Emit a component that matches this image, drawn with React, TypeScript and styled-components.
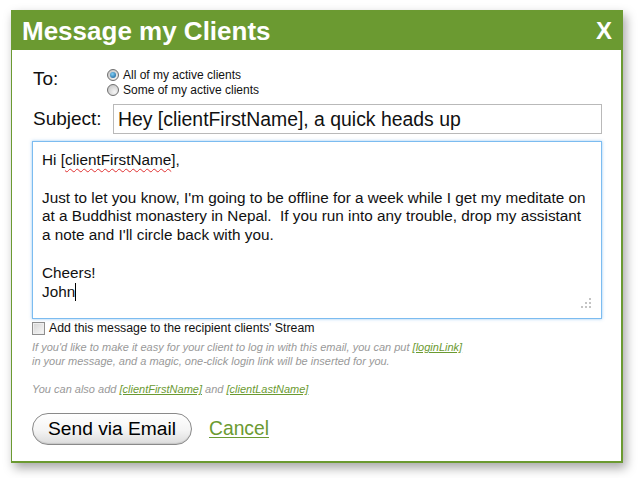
import styled, { createGlobalStyle } from 'styled-components';

const GlobalStyle = createGlobalStyle`
	html, body {
		margin: 0;
		padding: 0;
		background: #ffffff;
		font-family: Arial, 'Liberation Sans', sans-serif;
	}
`;

const GREEN = '#6b9a31';

export default function App() {
	return (
		<Page>
			<GlobalStyle />
			<Dialog>
				<Header>
					<Title>Message my Clients</Title>
					<Close>X</Close>
				</Header>
				<Body>
					<ToRow>
						<Label>To:</Label>
						<RadioGroup>
							<RadioLine>
								<Radio $checked />
								All of my active clients
							</RadioLine>
							<RadioLine>
								<Radio />
								Some of my active clients
							</RadioLine>
						</RadioGroup>
					</ToRow>
					<SubjectRow>
						<Label>Subject:</Label>
						<SubjectInput>Hey [clientFirstName], a quick heads up</SubjectInput>
					</SubjectRow>
					<MessageBox>
						<Line>
							Hi [<Misspelled>clientFirstName</Misspelled>],
						</Line>
						<Line />
						<Line>Just to let you know, I'm going to be offline for a week while I get my meditate on</Line>
						<Line>at a Buddhist monastery in Nepal.&nbsp; If you run into any trouble, drop my assistant</Line>
						<Line>a note and I'll circle back with you.</Line>
						<Line />
						<Line>Cheers!</Line>
						<Line>
							John<Caret />
						</Line>
						<Grip>
							<svg width="11" height="11" viewBox="0 0 11 11">
								<g fill="#c4c4c4">
									<rect x="8" y="0" width="2" height="2" />
									<rect x="8" y="4" width="2" height="2" />
									<rect x="4" y="4" width="2" height="2" />
									<rect x="8" y="8" width="2" height="2" />
									<rect x="4" y="8" width="2" height="2" />
									<rect x="0" y="8" width="2" height="2" />
								</g>
							</svg>
						</Grip>
					</MessageBox>
					<CheckRow>
						<Checkbox />
						Add this message to the recipient clients' Stream
					</CheckRow>
					<Help>
						If you'd like to make it easy for your client to log in with this email, you can put{' '}
						<Token>[loginLink]</Token>
						<br />
						in your message, and a magic, one-click login link will be inserted for you.
					</Help>
					<Help $spaced>
						You can also add <Token>[clientFirstName]</Token> and <Token>[clientLastName]</Token>
					</Help>
					<Actions>
						<SendButton>Send via Email</SendButton>
						<CancelLink>Cancel</CancelLink>
					</Actions>
				</Body>
			</Dialog>
		</Page>
	);
}

const Page = styled.div`
	padding: 10px 0 0 11px;
	width: 640px;
	height: 478px;
	box-sizing: border-box;
`;

const Dialog = styled.section`
	width: 612px;
	height: 453px;
	box-sizing: border-box;
	border: 1px solid ${GREEN};
	border-width: 0 2px 2px 1px;
	background: #fff;
	box-shadow: 3px 5px 10px rgba(0, 0, 0, 0.35);
	display: flex;
	flex-direction: column;
`;

const Header = styled.header`
	display: flex;
	align-items: center;
	justify-content: space-between;
	height: 40px;
	padding: 0 9px 0 10px;
	background: ${GREEN};
	color: #fff;
`;

const Title = styled.h1`
	margin: 0;
	font-size: 26px;
	font-weight: bold;
	padding-top: 2px;
`;

const Close = styled.span`
	font-size: 24px;
	font-weight: bold;
	padding-top: 1px;
`;

const Body = styled.div`
	padding: 18px 19px 0 20px;
	display: flex;
	flex-direction: column;
`;

const ToRow = styled.div`
	display: flex;
	align-items: flex-start;
`;

const Label = styled.label`
	width: 80px;
	font-size: 19px;
	color: #111;
	padding-left: 1px;
`;

const RadioGroup = styled.div`
	display: flex;
	flex-direction: column;
	margin-left: -6px;
	margin-top: -1px;
`;

const RadioLine = styled.div`
	display: flex;
	align-items: center;
	font-size: 12px;
	color: #111;
	height: 15px;
`;

const Radio = styled.span<{ $checked?: boolean }>`
	width: 12px;
	height: 12px;
	border-radius: 50%;
	box-sizing: border-box;
	border: 1px solid #6f6f6f;
	background: radial-gradient(circle at 65% 70%, #f6f6f6, #bdbdbd);
	margin-right: 4px;
	position: relative;

	${(p) =>
		p.$checked &&
		`
		&::after {
			content: '';
			position: absolute;
			left: 2px;
			top: 2px;
			width: 6px;
			height: 6px;
			border-radius: 50%;
			background: radial-gradient(circle at 40% 35%, #7fd0f8, #10548c);
		}
	`}
`;

const SubjectRow = styled.div`
	display: flex;
	align-items: center;
	margin-top: 7px;
`;

const SubjectInput = styled.div`
	flex: 1;
	height: 30px;
	box-sizing: border-box;
	border: 1px solid #b9b9b9;
	padding: 3px 0 0 4px;
	font-size: 19.4px;
	color: #111;
	white-space: nowrap;
	overflow: hidden;
`;

const MessageBox = styled.div`
	position: relative;
	margin-top: 7px;
	height: 178px;
	box-sizing: border-box;
	border: 1px solid #7cbcf0;
	box-shadow: 0 0 3px rgba(110, 175, 235, 0.7);
	padding: 9px 0 0 9px;
	font-size: 15.3px;
	color: #111;
	white-space: nowrap;
`;

const Line = styled.div`
	height: 18.8px;
	line-height: 18.8px;
`;

const Misspelled = styled.span`
	text-decoration: underline wavy #e03030;
	text-decoration-thickness: 1px;
	text-underline-offset: 3px;
`;

const Caret = styled.span`
	display: inline-block;
	width: 1px;
	height: 18px;
	background: #000;
	vertical-align: -4px;
`;

const Grip = styled.span`
	position: absolute;
	right: 9px;
	bottom: 9px;
	line-height: 0;
`;

const CheckRow = styled.label`
	display: flex;
	align-items: center;
	margin-top: 2px;
	font-size: 12.3px;
	color: #111;
`;

const Checkbox = styled.span`
	width: 11px;
	height: 11px;
	border: 1px solid #8f8f8f;
	background: linear-gradient(135deg, #d4d4d4, #f8f8f8);
	box-shadow: inset 0 0 0 1px #eee;
	margin-right: 4px;
`;

const Help = styled.p<{ $spaced?: boolean }>`
	margin: ${(p) => (p.$spaced ? '14px 0 0' : '5px 0 0')};
	font-size: 11px;
	line-height: 14px;
	font-style: italic;
	color: #999;
`;

const Token = styled.a`
	color: ${GREEN};
	text-decoration: underline;
`;

const Actions = styled.div`
	display: flex;
	align-items: center;
	gap: 17px;
	margin-top: 17px;
`;

const SendButton = styled.button`
	height: 32px;
	padding: 0 15px;
	border: 1px solid #8a8a8a;
	border-radius: 16px;
	background: linear-gradient(#ffffff, #f4f4f4 55%, #dcdcdc);
	box-shadow: inset 0 -1px 1px rgba(0, 0, 0, 0.1);
	font-family: Arial, 'Liberation Sans', sans-serif;
	font-size: 19.2px;
	color: #000;
`;

const CancelLink = styled.a`
	font-size: 19.3px;
	color: ${GREEN};
	text-decoration: underline;
	text-underline-offset: 2px;
`;
